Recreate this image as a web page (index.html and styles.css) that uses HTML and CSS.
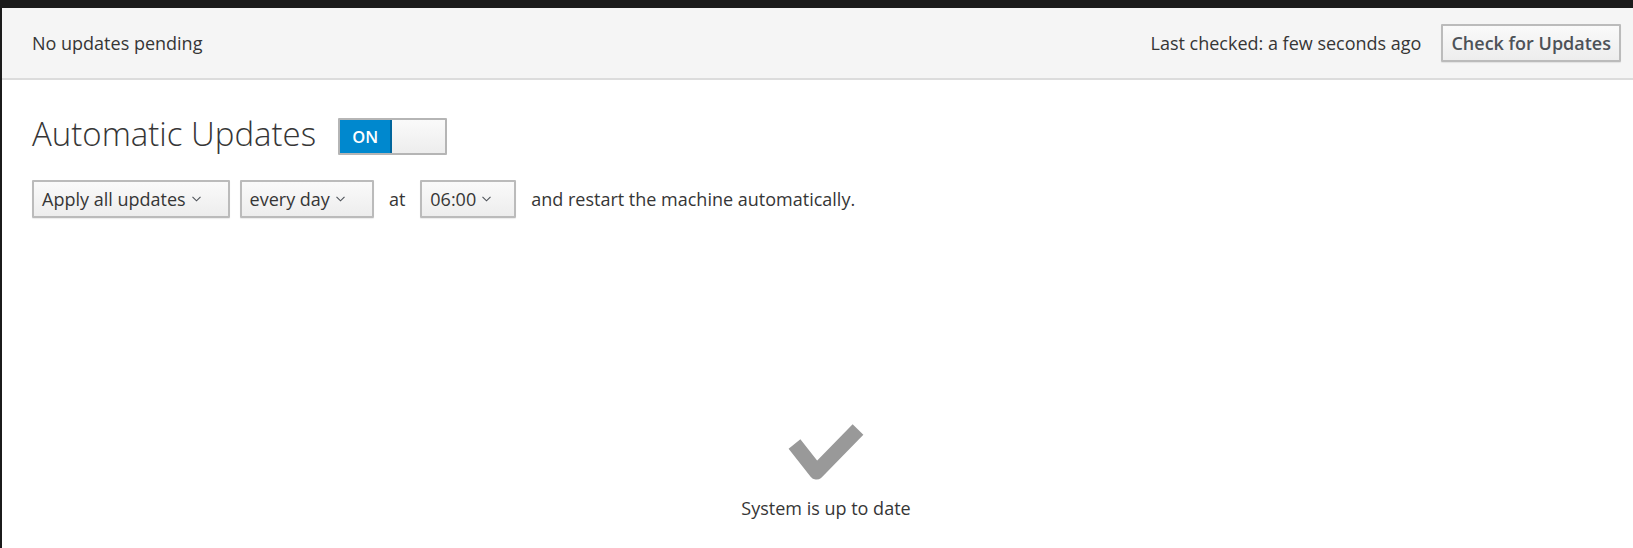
FILE: index.html
```html
<!DOCTYPE html>
<html lang="en">
<head>
    <meta charset="UTF-8">
    <title>Software Updates</title>
    <link rel="stylesheet" href="styles.css">
</head>
<body>
    <div class="topbar"></div>

    <div class="frame">
        <header class="status-bar">
            <span class="status-text">No updates pending</span>
            <div class="status-right">
                <span class="last-checked">Last checked: a few seconds ago</span>
                <button class="btn">Check for Updates</button>
            </div>
        </header>

        <main class="content">
            <div class="auto-title">
                <h2>Automatic Updates</h2>
                <div class="switch">
                    <span class="switch-on">ON</span>
                    <span class="switch-label"></span>
                </div>
            </div>

            <div class="auto-settings">
                <button class="btn dropdown dd-type">Apply all updates
                    <svg class="caret" width="9" height="6" viewBox="0 0 9 6"><polyline points="0.5,0.8 4.5,4.8 8.5,0.8" fill="none" stroke="#4d5258" stroke-width="1.1"/></svg>
                </button>
                <button class="btn dropdown dd-day">every day
                    <svg class="caret" width="9" height="6" viewBox="0 0 9 6"><polyline points="0.5,0.8 4.5,4.8 8.5,0.8" fill="none" stroke="#4d5258" stroke-width="1.1"/></svg>
                </button>
                <span class="settings-text">at</span>
                <button class="btn dropdown dd-time">06:00
                    <svg class="caret" width="9" height="6" viewBox="0 0 9 6"><polyline points="0.5,0.8 4.5,4.8 8.5,0.8" fill="none" stroke="#4d5258" stroke-width="1.1"/></svg>
                </button>
                <span class="settings-text">and restart the machine automatically.</span>
            </div>

            <div class="empty-state">
                <svg class="check-icon" width="76" height="59" viewBox="0 0 76 59">
                    <polyline points="6.5,22 28.5,50 70,7.5" fill="none" stroke="#999" stroke-width="15" stroke-linejoin="round"/>
                </svg>
                <p>System is up to date</p>
            </div>
        </main>
    </div>
</body>
</html>
```

FILE: styles.css
```css
body {
    margin: 0;
    font-family: 'Open Sans', 'Noto Sans', sans-serif;
    font-size: 18px;
    color: #363636;
    background: #1b1b1b;
}

.topbar {
    height: 8px;
    background: #1b1b1b;
}

.frame {
    margin-left: 2px;
    background: #fff;
    min-height: 540px;
}

.status-bar {
    display: flex;
    align-items: center;
    justify-content: space-between;
    height: 70px;
    padding: 0 12px 0 30px;
    background: #f5f5f5;
    border-bottom: 2px solid #dcdcdc;
}

.status-right {
    display: flex;
    align-items: center;
    gap: 20px;
}

.btn {
    font-family: inherit;
    font-size: 18px;
    font-weight: 600;
    color: #4d5258;
    height: 38px;
    padding: 0 8px;
    border: 2px solid #bbb;
    border-radius: 1px;
    background: linear-gradient(to bottom, #fafafa, #ededed);
    box-shadow: 0 1px 1px rgba(3, 3, 3, 0.08);
}

.content {
    padding: 0 30px;
}

.auto-title {
    display: flex;
    align-items: center;
    gap: 22px;
    padding-top: 31px;
}

.auto-title h2 {
    margin: 0;
    padding-bottom: 6px;
    font-size: 33px;
    font-weight: 300;
    color: #363636;
}

.switch {
    display: flex;
    width: 105px;
    height: 33px;
    border: 2px solid #b5b5b5;
    border-radius: 1px;
}

.switch-on {
    width: 50px;
    display: flex;
    align-items: center;
    justify-content: center;
    background: #0088ce;
    color: #fff;
    font-size: 16.5px;
    font-weight: 600;
    border-right: 2px solid #00659c;
}

.switch-label {
    flex: 1;
    background: linear-gradient(to bottom, #fafafa, #ededed);
}

.auto-settings {
    display: flex;
    align-items: center;
    gap: 10px;
    margin-top: 18px;
}

.dropdown {
    display: flex;
    align-items: center;
    gap: 6px;
    font-weight: 400;
    color: #363636;
    padding: 0 25px 0 8px;
}

.dd-type,
.dd-day {
    padding-right: 27px;
}

.dd-time {
    padding-right: 23px;
}

.settings-text {
    margin: 0 5px;
}

.empty-state {
    display: flex;
    flex-direction: column;
    align-items: center;
    padding-left: 17px;
    margin-top: 204px;
}

.empty-state p {
    margin: 15px 0 0;
}
```
